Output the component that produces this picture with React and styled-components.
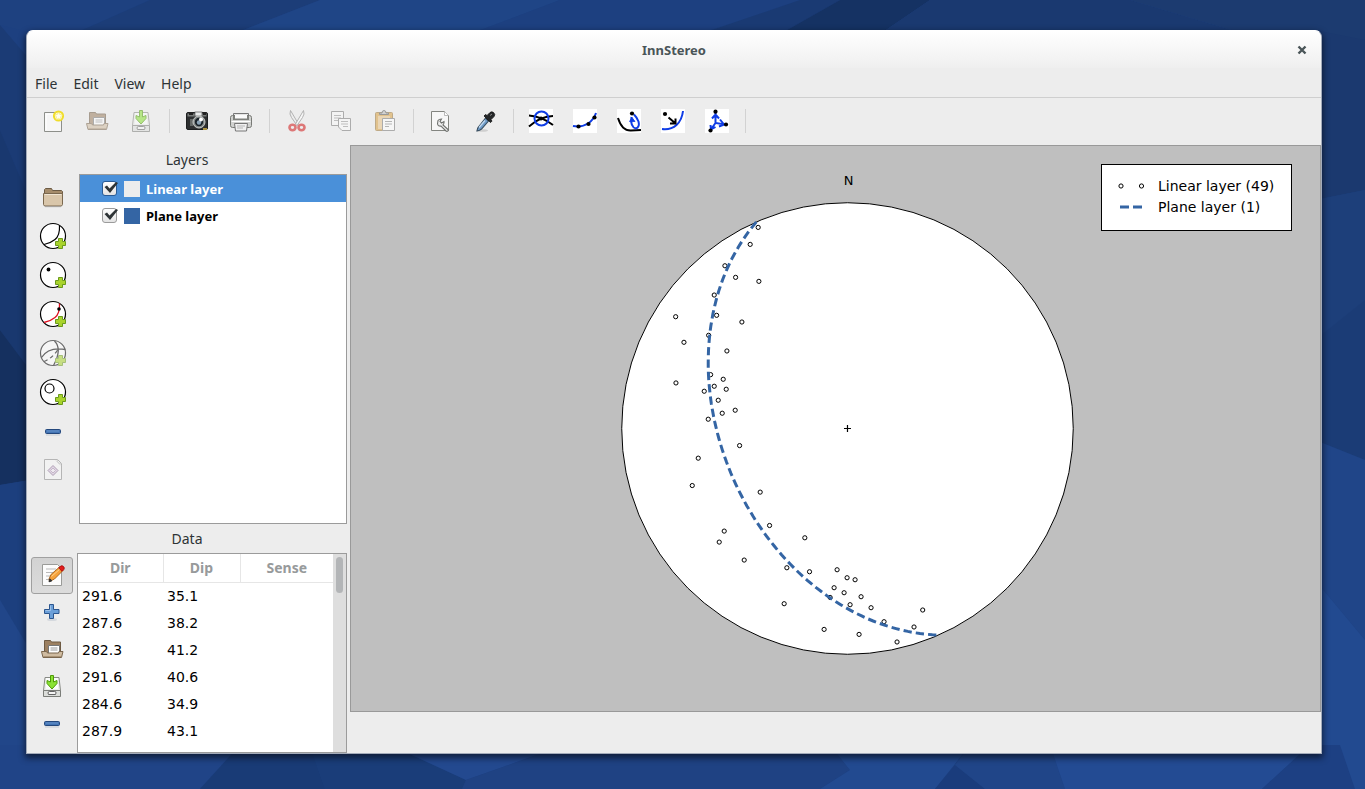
import React, { useState } from "react";
import styled, { createGlobalStyle, css } from "styled-components";

const GlobalStyle = createGlobalStyle`
  *, *::before, *::after { box-sizing: border-box; }
  body {
    margin: 0;
    font-family: "Noto Sans", "Open Sans", sans-serif;
    font-size: 14px;
    line-height: 20px;
    color: #2e3436;
    background: #1d4080;
  }
  button { font: inherit; color: inherit; }
`;

const Desktop = styled.div`
  position: relative;
  display: flex;
  min-height: 100vh;
  padding: 30px 43px 35px 26px;
`;

const Wallpaper = styled.svg`
  position: absolute;
  inset: 0;
  width: 100%;
  height: 100%;
`;

const Window = styled.main`
  position: relative;
  flex: 1;
  min-width: 0;
  display: flex;
  flex-direction: column;
  border: 1px solid #a3abba;
  border-top-color: #fff;
  border-radius: 7px 7px 0 0;
  background: #ededed;
  box-shadow: 0 3px 6px 1px rgba(10, 15, 30, 0.7);
  overflow: hidden;
`;

const TitleBar = styled.header`
  display: grid;
  grid-template-columns: 38px 1fr 38px;
  align-items: center;
  height: 37px;
  background: linear-gradient(#ffffff, #efefef);
`;

const Title = styled.h1`
  grid-column: 2;
  margin: 0;
  font-size: 13px;
  line-height: 20px;
  text-align: center;
  color: #4a5558;
`;

const CloseButton = styled.button`
  display: grid;
  place-items: center;
  width: 38px;
  height: 32px;
  padding: 0;
  border: 0;
  background: none;
`;

const MenuBar = styled.nav`
  display: flex;
  align-items: center;
  gap: 16px;
  height: 30px;
  padding: 3px 8px 0;
  border-bottom: 1px solid #cfcfcf;
`;

const MenuItem = styled.button`
  padding: 0;
  border: 0;
  background: none;
`;

const Toolbar = styled.div`
  display: flex;
  align-items: center;
  height: 47px;
  padding: 0 4px 1px;
`;

const ToolButton = styled.button`
  display: grid;
  place-items: center;
  width: 44px;
  height: 40px;
  padding: 0;
  border: 0;
  background: none;
`;

const Separator = styled.span`
  width: 12px;
  height: 24px;
  background: linear-gradient(#d2d2d2, #d2d2d2) center / 1px 100% no-repeat;
`;

const Glyph = styled.svg`
  display: block;
  overflow: visible;
  width: ${(p) => p.$size || 24}px;
  height: ${(p) => p.$size || 24}px;
  opacity: ${(p) => (p.$dim ? 0.55 : 1)};
`;

const Body = styled.div`
  flex: 1;
  display: flex;
  min-height: 0;
`;

const SidePane = styled.aside`
  flex: none;
  display: flex;
  flex-direction: column;
  width: 323px;
  padding-right: 3px;
`;

const PaneTitle = styled.h2`
  margin: 0;
  height: 29px;
  font-size: 14px;
  line-height: 29px;
  font-weight: 400;
  text-align: center;
`;

const LayerSection = styled.section`
  flex: 1;
  display: flex;
  min-height: 350px;
`;

const DataSection = styled.section`
  display: flex;
  height: 200px;
`;

const ToolColumn = styled.div`
  flex: none;
  display: flex;
  flex-direction: column;
  align-items: center;
  width: ${(p) => p.$width}px;
  padding-top: 4px;
`;

const SideButton = styled.button`
  flex: none;
  display: grid;
  place-items: center;
  width: 42px;
  height: ${(p) => p.$height}px;
  padding: 0 0 2px;
  border: 1px solid transparent;
  border-radius: 3px;
  background: none;
  ${(p) =>
    p.$pressed &&
    css`
      border-color: #a0a0a0;
      background: linear-gradient(#d2d2d2, #dcdcdc);
    `}
`;

const LayerList = styled.ul`
  flex: 1;
  margin: 0;
  padding: 0;
  list-style: none;
  border: 1px solid #9b9b9b;
  background: #fff;
`;

const LayerRow = styled.li`
  display: flex;
  align-items: center;
  height: 27px;
  padding-left: 22px;
  font-size: 13px;
  font-weight: 700;
  color: ${(p) => (p.$selected ? "#fff" : "#000")};
  background: ${(p) => (p.$selected ? "#4a90d9" : "#fff")};
`;

const LayerLabel = styled.label`
  display: flex;
  align-items: center;
  gap: 6px;
`;

const CheckWrap = styled.span`
  position: relative;
  display: block;
  width: 16px;
  height: 16px;
`;

const CheckInput = styled.input`
  appearance: none;
  display: block;
  width: 15px;
  height: 15px;
  margin: 0;
  border: 1px solid ${(p) => (p.$selected ? "#2a5c96" : "#9b9b9b")};
  border-radius: 3px;
  background: linear-gradient(#ffffff, #e3e3e3);
  &:not(:checked) + svg { display: none; }
`;

const CheckMark = styled.svg`
  position: absolute;
  left: 1px;
  top: 0;
  width: 16px;
  height: 14px;
  pointer-events: none;
`;

const Swatch = styled.span`
  width: 16px;
  height: 16px;
  background: ${(p) => p.$color};
`;

const DataFrame = styled.div`
  flex: 1;
  display: flex;
  align-items: stretch;
  overflow: hidden;
  border: 1px solid #9b9b9b;
  background: #fff;
`;

const DataTable = styled.table`
  flex: 1;
  align-self: flex-start;
  table-layout: fixed;
  border-collapse: collapse;
`;

const HeadCell = styled.th`
  width: ${(p) => p.$width};
  height: 28px;
  padding: 0;
  border-bottom: 1px solid #e6e6e6;
  font-size: 14px;
  color: #979a9b;
  & + & { border-left: 1px solid #e6e6e6; }
`;

const Cell = styled.td`
  height: 27px;
  padding: 0 4px;
  font-family: "DejaVu Sans", sans-serif;
  color: #000;
`;

const ScrollTrack = styled.div`
  flex: none;
  width: 13px;
  padding: 3px;
  background: #dedede;
`;

const ScrollThumb = styled.div`
  height: 36px;
  border-radius: 4px;
  background: #b3b5b7;
`;

const PlotPane = styled.section`
  flex: 1;
  min-width: 0;
  display: flex;
  flex-direction: column;
  padding-bottom: 41px;
`;

const Canvas = styled.div`
  position: relative;
  flex: 1;
  display: flex;
  min-height: 0;
  border: 1px solid #999;
  background: #bfbfbf;
`;

const Plot = styled.svg`
  flex: 1;
  min-width: 0;
  display: block;
`;

const Legend = styled.ul`
  position: absolute;
  top: 18px;
  right: 28px;
  display: grid;
  gap: 1px;
  margin: 0;
  padding: 11px 12px 13px 16px;
  list-style: none;
  border: 1px solid #000;
  background: #fff;
`;

const LegendItem = styled.li`
  display: flex;
  align-items: center;
  gap: 14px;
  min-width: 161px;
  font-family: "DejaVu Sans", sans-serif;
  line-height: 20px;
  color: #000;
`;

const LegendKey = styled.svg`
  width: 26px;
  height: 10px;
`;

/* Icons */

const NewIcon = () => (
  <Glyph viewBox="0 0 24 24">
    <path d="M3.500 3.500h13l4 4v15h-17z" fill="#f6f6f6" stroke="#8d8f8a" />
    <path d="M5 21V5h9" fill="none" stroke="#fff" />
    <circle cx="17.500" cy="7" r="4.600" fill="#fffbd0" stroke="#f0dd2a" strokeWidth="2" />
    <path d="M17.500 3l1.300 2.500 2.800.4-2 2 .5 2.800-2.600-1.300-2.500 1.300.5-2.800-2-2 2.800-.4z" fill="#fffef0" stroke="#f3e35a" strokeWidth=".6" />
  </Glyph>
);

const OpenIcon = ({ dim }) => (
  <Glyph viewBox="0 0 24 24" $dim={dim}>
    <path d="M4.500 3.500h6l1 1.500h9v13h-16z" fill="#9c8061" stroke="#6e5a43" />
    <path d="M8.500 8.500h11v9h-11z" fill="#fff" stroke="#777" />
    <path d="M10.500 11h7M10.500 13h7" stroke="#999" />
    <path d="M1.500 14.500h5l1 1.500h11l.5-1.500h4l-1.500 6h-18.500z" fill="#cfbba0" stroke="#7a664e" />
    <path d="M3 19.500h18" stroke="#aa9376" />
  </Glyph>
);

const SaveIcon = ({ dim }) => (
  <Glyph viewBox="0 0 24 24" $dim={dim}>
    <path d="M5 3.500h14l1.500 13v5.500H3.500v-5.500z" fill="#eceeeb" stroke="#888a85" />
    <path d="M3.500 16.500h17v6h-17z" fill="#dcdedb" stroke="#7b7d79" />
    <rect x="6" y="4" width="12" height="11" fill="#fff" opacity=".8" />
    <path d="M9.500 17.500h5q2 0 1.500 1.500l-.5 1.500h-7l-.5-1.500q0-1.500 1.500-1.500z" fill="#f5f5f5" stroke="#555" strokeWidth=".9" />
    <path d="M10.500 1.500h3v6.500l3.500-1.500v3L12 15l-5-5.500v-3L10.500 8z" fill="#8ae234" stroke="#4e9a06" />
  </Glyph>
);

const CameraIcon = () => (
  <Glyph viewBox="0 0 24 24">
    <rect x="1.500" y="3.500" width="21" height="17" rx="1.500" fill="#2d2f30" stroke="#1d1f20" />
    <path d="M2.500 4.500h19v3h-19z" fill="#777a78" />
    <path d="M4 3h4v3H4zM18 3h3v3h-3z" fill="#222" />
    <rect x="10" y="3" width="7" height="4" fill="#e8eaea" stroke="#555" strokeWidth=".7" />
    <path d="M5 10h3v7H5z" fill="#656967" />
    <circle cx="14" cy="13" r="6" fill="#858b89" stroke="#d4d6d5" strokeWidth=".9" />
    <circle cx="14" cy="13" r="4.200" fill="#1a2229" />
    <circle cx="14" cy="13.500" r="2.200" fill="#8ba3b5" />
    <circle cx="16" cy="10.500" r="2" fill="#fff" />
    <path d="M18 20h4" stroke="#d9b84a" strokeWidth="1.500" />
  </Glyph>
);

const PrinterIcon = () => (
  <Glyph viewBox="0 0 24 24">
    <path d="M4.500 4.500h15v7h-15z" fill="#e5e5e5" stroke="#777" />
    <rect x="1.500" y="6.500" width="21" height="12" rx="2" fill="#d0d1cf" stroke="#787a76" />
    <path d="M4 7h16v4H4z" fill="#7f817d" />
    <path d="M6 6h12v3.500H6z" fill="#fbfbfb" />
    <path d="M2.500 12.500h19" stroke="#fff" />
    <path d="M5.500 14.500h13l-1 7.500h-11z" fill="#f0f0f0" stroke="#777" />
    <path d="M8 17h8M8 19h6" stroke="#b5b5b5" />
  </Glyph>
);

const CutIcon = () => (
  <Glyph viewBox="0 0 24 24" $dim>
    <path d="M5.500 1.500q-1.500 3.500 1 7l5.500 8 1.500-1.500z" fill="#eee" stroke="#777" strokeWidth=".9" />
    <path d="M18.500 1.500q1.500 3.500-1 7l-5.500 8-1.500-1.500z" fill="#fff" stroke="#777" strokeWidth=".9" />
    <ellipse cx="7.500" cy="18.500" rx="3" ry="2.700" fill="none" stroke="#d01818" strokeWidth="2.600" />
    <ellipse cx="16.500" cy="18.500" rx="3" ry="2.700" fill="none" stroke="#d01818" strokeWidth="2.600" />
  </Glyph>
);

const CopyIcon = () => (
  <Glyph viewBox="0 0 24 24" $dim>
    <path d="M2.500 2.500h12v14h-12z" fill="#f8f8f8" stroke="#777" />
    <path d="M5 6.500h7M5 9h7M5 11.500h5" stroke="#999" />
    <path d="M9.500 9.500h12v12h-8.500l-3.500-3.500z" fill="#fbfbfb" stroke="#777" />
    <path d="M12 12.500h7M12 15h7M14 17.500h5" stroke="#999" />
  </Glyph>
);

const PasteIcon = () => (
  <Glyph viewBox="0 0 24 24" $dim>
    <rect x="2.500" y="3.500" width="17" height="18" rx="1" fill="#d9a040" stroke="#9a7435" />
    <path d="M5 7h12v13H5z" fill="#e9c58a" />
    <path d="M6.500 5.500V4h2.500q0-2.500 2-2.500t2 2.500h2.500v1.500z" fill="#bbb" stroke="#555" />
    <path d="M9.500 9.500h12v12h-12z" fill="#fff" stroke="#777" />
    <path d="M12 12.500h7M12 15h7M12 17.500h4" stroke="#888" />
  </Glyph>
);

const PropertiesIcon = () => (
  <Glyph viewBox="0 0 24 24">
    <path d="M2.500 2.500h13l4 4v15h-17z" fill="#f7f7f7" stroke="#838580" />
    <path d="M15.500 2.500v4h4" fill="#fff" stroke="#aaa" strokeWidth=".8" />
    <path d="M9 11.500q1-1.500 3.500-1.500l-1.500 2.500 1.500 1.500 2.500-1.500q.5 2-1 3.500l5.500 5q-1 2-2.500 1l-5-5q-3 .5-3.500-2z" fill="#eee" stroke="#70726f" strokeWidth="1.100" />
  </Glyph>
);

const PickerIcon = () => (
  <Glyph viewBox="0 0 24 24">
    <ellipse cx="9" cy="21.500" rx="6" ry="1.300" fill="#bbb" opacity=".6" />
    <path d="M12.500 9l3 3-7 8q-1.500 1.500-4.500 2 .3-3 1.800-4.500z" fill="#709cc9" stroke="#3a5062" strokeWidth="1.100" />
    <path d="M12 11.500l-6 7" stroke="#c0d8ee" strokeWidth="1.300" />
    <path d="M11 7l1.500-1.500 1.500 1 3-3q2-1.500 3.800.3t.2 3.800l-3 3 1 1.500-1.500 1.500z" fill="#252829" stroke="#111" strokeWidth=".8" />
    <path d="M17 6.500l2-1.500" stroke="#888" />
  </Glyph>
);

const Tile = ({ children }) => (
  <Glyph viewBox="0 0 24 24" fill="none" strokeWidth="2">
    <rect width="24" height="24" fill="#fff" />
    {children}
  </Glyph>
);
const BLUE = "#0f3de6";

const IntersectIcon = () => (
  <Tile>
    <path d="M0 17.500Q12 7 24 7M0 6.500q13 1 24 9.500" stroke="#000" />
    <circle cx="12.500" cy="9.500" r="7" stroke={BLUE} />
    <circle cx="12" cy="9.500" r="2" fill="#000" />
  </Tile>
);

const GirdleIcon = () => (
  <Tile>
    <path d="M0 17q9 1.500 15-2.500T23 4" stroke={BLUE} />
    <g fill="#000">
      <circle cx="5.500" cy="17.500" r="2.100" />
      <circle cx="15.500" cy="15" r="2.100" />
      <circle cx="21.500" cy="8.500" r="2.100" />
    </g>
  </Tile>
);

const RotateIcon = () => (
  <Tile>
    <path d="M1 9q4 13 13 12.500l10-.5" stroke="#000" />
    <path d="M14.500 8q-1.500 10 4.500 11.500 4-1.500 2.500-7-1.500-4-4.500-7" stroke={BLUE} />
    <path d="M12.500 12.500l2.500-4 3 4z" fill={BLUE} stroke={BLUE} strokeWidth=".8" />
    <circle cx="15" cy="4.500" r="2.100" fill="#000" />
  </Tile>
);

const NormalIcon = () => (
  <Tile>
    <path d="M1 20q9 1 14.500-4T22 2" stroke={BLUE} />
    <path d="M7.500 8.500l6.500 5.500M14.500 9.500v5h-5.500" stroke="#000" />
    <circle cx="4" cy="5" r="2.100" fill="#000" />
  </Tile>
);

const AxesIcon = () => (
  <Tile>
    <path d="M10.500 4v10l9.500 1.500M10.500 14L5.500 21M7 9.500L10.500 5.500l3.500 4M15 10.500l4 5-5 2M5.500 16l.5 4.500 4.500-2.500" stroke={BLUE} />
    <g fill="#000">
      <circle cx="10.500" cy="2.700" r="2.100" />
      <circle cx="21" cy="15.500" r="2.100" />
      <circle cx="5.500" cy="21.500" r="2.100" />
    </g>
  </Tile>
);

const FolderIcon = () => (
  <Glyph viewBox="0 0 24 24">
    <path d="M3.500 11V4.500l1-1h6l1 2h9l1 1V11z" fill="#a58c6b" stroke="#6c5b45" />
    <path d="M2.500 8.500h19v11l-1 1.500H3.500l-1-1.500z" fill="#d9c6aa" stroke="#7a684f" />
    <path d="M3.500 9.500h17" stroke="#efe4d2" />
    <path d="M4 21.700h16" stroke="#999" opacity=".6" />
  </Glyph>
);

const NetIcon = ({ dim, children }) => (
  <Glyph viewBox="0 0 28 28" $size={28} $dim={dim} fill="none">
    <circle cx="14" cy="14" r="12.500" fill="#fff" stroke="#000" strokeWidth="1.200" />
    {children}
    <path d="M19.500 16.500h4v3h3v4h-3v3h-4v-3h-3v-4h3z" fill="#a9d32c" stroke="#6b9a1c" />
  </Glyph>
);

const PlaneLayerIcon = () => (
  <NetIcon>
    <path d="M20.500 3.500q.5 10-4.500 14T5 22.500" stroke="#000" strokeWidth="1.200" />
  </NetIcon>
);
const LineLayerIcon = () => (
  <NetIcon>
    <circle cx="9.500" cy="8.500" r="1.900" fill="#000" />
  </NetIcon>
);
const FaultLayerIcon = () => (
  <NetIcon>
    <path d="M20.500 3.500q.5 10-4.500 14T5 22.500" stroke="#e01020" strokeWidth="1.300" />
    <circle cx="20" cy="9" r="1.800" fill="#000" />
  </NetIcon>
);
const EigenLayerIcon = () => (
  <NetIcon dim>
    <path d="M15.500 2q8 8-1 24.500M2.500 18.500q7-11 24-8" stroke="#000" strokeWidth="1.300" />
    <path d="M5 22.500q8-3 14-12" stroke="#000" strokeWidth="1.200" strokeDasharray="4 3" />
  </NetIcon>
);
const SmallCircleIcon = () => (
  <NetIcon>
    <circle cx="10.500" cy="10.500" r="4.500" stroke="#000" strokeWidth="1.200" />
  </NetIcon>
);

const MinusIcon = () => (
  <Glyph viewBox="0 0 24 24">
    <rect x="5" y="15" width="14" height="2" fill="#c5cbd4" opacity=".5" />
    <rect x="4.500" y="10.500" width="15" height="4" rx="1" fill="#4475b5" stroke="#24487c" />
    <path d="M6 12h12" stroke="#6793c9" />
  </Glyph>
);

const PlusIcon = () => (
  <Glyph viewBox="0 0 24 24">
    <ellipse cx="12" cy="19.500" rx="5" ry="1.500" fill="#c5cbd4" opacity=".6" />
    <path d="M9.500 4.500h4v5h5.500v4h-5.500v5h-4v-5H4.500v-4h5z" fill="#6b9fd8" stroke="#2c568f" strokeLinejoin="round" />
    <path d="M10.500 5.500v5H5.500" fill="none" stroke="#9cc1e8" />
  </Glyph>
);

const LayerPropsIcon = () => (
  <Glyph viewBox="0 0 24 24" $dim>
    <path d="M3.500 1.500h13l4 4v16h-17z" fill="#f7f7f7" stroke="#888" />
    <path d="M15 2.500l5 5M16.500 1.500q-1 4 4 4" fill="none" stroke="#aaa" strokeWidth=".8" />
    <path d="M12 7.500l5 5-5 5-5-5z" fill="#d9c6de" stroke="#7d5f88" />
    <path d="M12 10l2.500 2.500L12 15l-2.500-2.500z" fill="#efe6f1" stroke="#a58bad" />
  </Glyph>
);

const EditIcon = () => (
  <Glyph viewBox="0 0 24 24">
    <path d="M2.500 1.500h15l4 4v17h-19z" fill="#fcfcfc" stroke="#9a9b98" />
    <path d="M6 6h10M6 9.500h10M6 13h9M6 16.500h4" stroke="#b9b9b9" />
    <path d="M9 16l2-4.500L19.500 4l3.500 3.500-8.500 8.500-5 2.500z" fill="#f6a13a" stroke="#a5611a" strokeWidth=".9" />
    <path d="M11.500 13.500l9-8" stroke="#fcd28f" />
    <path d="M18.700 5l2-2q1.500-.8 2.800.5t.5 2.800l-2 2z" fill="#e01c1c" stroke="#a50000" strokeWidth=".8" />
    <path d="M9 18.800l.8-3 2.200 2z" fill="#333" stroke="#333" />
  </Glyph>
);

/* Data */

const MENUS = ["File", "Edit", "View", "Help"];

const TOOL_GROUPS = [
  [["New", NewIcon], ["Open", OpenIcon, true], ["Save", SaveIcon, true]],
  [["Save image", CameraIcon], ["Print", PrinterIcon]],
  [["Cut", CutIcon], ["Copy", CopyIcon], ["Paste", PasteIcon]],
  [["Plot properties", PropertiesIcon], ["Pick color", PickerIcon]],
  [
    ["Plane intersections", IntersectIcon],
    ["Best fitting plane", GirdleIcon],
    ["Rotate", RotateIcon],
    ["Normals", NormalIcon],
    ["Eigenvectors", AxesIcon],
  ],
];

const LAYER_TOOLS = [
  ["New group", FolderIcon],
  ["New plane layer", PlaneLayerIcon],
  ["New linear layer", LineLayerIcon],
  ["New faultplane layer", FaultLayerIcon],
  ["New eigenvector layer", EigenLayerIcon],
  ["New small circle layer", SmallCircleIcon],
  ["Delete layer", MinusIcon],
  ["Layer properties", LayerPropsIcon],
];

const DATA_TOOLS = [
  ["Edit data", EditIcon],
  ["Add row", PlusIcon],
  ["Import data", OpenIcon],
  ["Export data", SaveIcon],
  ["Delete row", MinusIcon],
];

const LAYERS = [
  { name: "Linear layer", color: "#ededed" },
  { name: "Plane layer", color: "#3465a4" },
];

const ROWS = [
  ["291.6", "35.1"],
  ["287.6", "38.2"],
  ["282.3", "41.2"],
  ["291.6", "40.6"],
  ["284.6", "34.9"],
  ["287.9", "43.1"],
];

/* Projected lineations, in plot units from the centre of the net. */
const POINTS = [
  [-89.4, -201.3], [-97.4, -184.3], [-122.7, -162.9], [-112, -151.3], [-88.7, -147.3],
  [-133.4, -133.6], [-172, -111.9], [-131, -113.3], [-105.7, -106.6], [-139, -93.3],
  [-163.7, -86.3], [-120.7, -77.6], [-137, -53.9], [-124.4, -49.3], [-171.7, -45.6],
  [-133.4, -42.3], [-121.4, -39.3], [-143.4, -37.3], [-129.4, -28.3], [-112.4, -18.3],
  [-125.4, -15.3], [-139.4, -9.3], [-108, 17.1], [-149.4, 29.7], [-155.4, 57.1],
  [-87.4, 63.7], [-78, 97.1], [-123.4, 102.7], [-128.4, 113.7], [-42.7, 109.4],
  [-103.4, 131.7], [-60.7, 139.4], [-38, 143.4], [-63.4, 175.4], [-23.4, 201.1],
  [-10.4, 141.4], [-13.4, 159.4], [-3.4, 164.4], [-17.4, 169.1], [-0.4, 149.4],
  [7.6, 151.4], [2.6, 176.4], [13.6, 168.4], [23.6, 179.4], [36.6, 193.4],
  [11.6, 206.1], [49.6, 213.7], [66.6, 198.7], [75.3, 181.7],
];

const RADIUS = 226;

/* Equal-area projection of the great circle of a plane. */
function greatCircle(strikeDeg, dipDeg) {
  const rad = Math.PI / 180;
  const strike = strikeDeg * rad;
  const dip = dipDeg * rad;
  const along = [-Math.sin(strike), -Math.cos(strike)];
  const across = [-Math.cos(strike), Math.sin(strike)];
  const out = [];
  for (let rake = 0; rake <= 180; rake += 2) {
    const a = Math.cos(rake * rad);
    const b = Math.sin(rake * rad) * Math.cos(dip);
    const down = Math.sin(rake * rad) * Math.sin(dip);
    const r = (RADIUS * Math.sqrt(1 - down)) / Math.hypot(a, b);
    const x = r * (a * along[0] + b * across[0]);
    const y = r * (a * along[1] + b * across[1]);
    out.push(`${x.toFixed(1)},${y.toFixed(1)}`);
  }
  return out.join(" ");
}

/* Facets of the desktop background. */
const FACETS = [
  ["0,0 150,0 60,40 0,25", "#1e4180"],
  ["150,0 320,0 230,35 60,40", "#1c3d78"],
  ["320,0 560,0 470,34 230,35", "#1f4586"],
  ["560,0 800,0 700,34 470,34", "#1d4080"],
  ["800,0 840,0 780,34 700,34", "#1a3a73"],
  ["840,0 930,0 880,34 780,34", "#153263"],
  ["930,0 1130,0 1245,34 880,34", "#1a3970"],
  ["1130,0 1365,0 1365,40 1245,34", "#1c3b70"],
  ["0,25 30,60 30,200 0,130", "#1b3b75"],
  ["0,130 30,200 30,370 0,330", "#19386f"],
  ["0,330 30,370 30,480 0,485", "#15305f"],
  ["0,485 30,480 30,650 0,600", "#1c3f7e"],
  ["0,600 30,650 30,789 0,789", "#214689"],
  ["1315,30 1365,40 1365,190 1315,200", "#1b396f"],
  ["1315,200 1365,190 1365,300 1315,340", "#1d3f7a"],
  ["1315,340 1365,300 1365,460 1315,440", "#1b3c76"],
  ["1315,440 1365,460 1365,640 1315,580", "#204588"],
  ["1315,580 1365,640 1365,789 1315,789", "#224a90"],
  ["0,745 240,745 200,789 0,789", "#204487"],
  ["240,745 310,745 325,789 200,789", "#193b76"],
  ["310,745 390,745 466,780 462,789 325,789", "#1a3d79"],
  ["390,745 565,745 466,780", "#23498f"],
  ["565,745 830,745 850,770 820,789 462,789 466,780", "#1f4283"],
  ["830,745 970,745 935,789 820,789 850,770", "#224a90"],
  ["955,765 985,789 935,789", "#1a3c7c"],
  ["970,745 1050,745 1065,789 985,789 955,765", "#204588"],
  ["1050,745 1310,745 1262,789 1065,789", "#234b93"],
  ["1310,745 1340,745 1355,789 1262,789", "#1d4083"],
];

export default function App() {
  const [visible, setVisible] = useState([true, true]);
  const toggle = (i) => setVisible(visible.map((v, k) => (k === i ? !v : v)));

  return (
    <>
      <GlobalStyle />
      <Desktop>
        <Wallpaper viewBox="0 0 1365 789" preserveAspectRatio="none" aria-hidden="true">
          {FACETS.map(([points, fill]) => (
            <polygon key={points} points={points} fill={fill} />
          ))}
        </Wallpaper>
        <Window>
          <TitleBar>
            <Title>InnStereo</Title>
            <CloseButton aria-label="Close">
              <svg width="10" height="10" viewBox="0 0 10 10">
                <path d="M1.500 1.500l7 7M8.500 1.500l-7 7" stroke="#4a5558" strokeWidth="2.400" />
              </svg>
            </CloseButton>
          </TitleBar>
          <MenuBar>
            {MENUS.map((m) => (
              <MenuItem key={m}>{m}</MenuItem>
            ))}
          </MenuBar>
          <Toolbar role="toolbar">
            {TOOL_GROUPS.map((group, g) => (
              <React.Fragment key={g}>
                {group.map(([label, Icon, dim]) => (
                  <ToolButton key={label} aria-label={label}>
                    <Icon dim={dim} />
                  </ToolButton>
                ))}
                <Separator />
              </React.Fragment>
            ))}
          </Toolbar>
          <Body>
            <SidePane>
              <PaneTitle>Layers</PaneTitle>
              <LayerSection>
                <ToolColumn $width={52}>
                  {LAYER_TOOLS.map(([label, Icon]) => (
                    <SideButton key={label} $height={39} aria-label={label}>
                      <Icon />
                    </SideButton>
                  ))}
                </ToolColumn>
                <LayerList>
                  {LAYERS.map((layer, i) => (
                    <LayerRow key={layer.name} $selected={i === 0}>
                      <LayerLabel>
                        <CheckWrap>
                          <CheckInput
                            type="checkbox"
                            $selected={i === 0}
                            checked={visible[i]}
                            onChange={() => toggle(i)}
                          />
                          <CheckMark viewBox="0 0 16 14">
                            <path d="M1.500 6l2.500-1.500 2.500 3L13 1l2 1L7 12z" fill="#2e3436" />
                          </CheckMark>
                        </CheckWrap>
                        <Swatch $color={layer.color} />
                        {layer.name}
                      </LayerLabel>
                    </LayerRow>
                  ))}
                </LayerList>
              </LayerSection>
              <PaneTitle>Data</PaneTitle>
              <DataSection>
                <ToolColumn $width={50}>
                  {DATA_TOOLS.map(([label, Icon], i) => (
                    <SideButton key={label} $height={37} $pressed={i === 0} aria-label={label}>
                      <Icon />
                    </SideButton>
                  ))}
                </ToolColumn>
                <DataFrame>
                  <DataTable>
                    <thead>
                      <tr>
                        <HeadCell $width="85px">Dir</HeadCell>
                        <HeadCell $width="77px">Dip</HeadCell>
                        <HeadCell>Sense</HeadCell>
                      </tr>
                    </thead>
                    <tbody>
                      {ROWS.map(([dir, dip], i) => (
                        <tr key={i}>
                          <Cell>{dir}</Cell>
                          <Cell>{dip}</Cell>
                          <Cell />
                        </tr>
                      ))}
                    </tbody>
                  </DataTable>
                  <ScrollTrack>
                    <ScrollThumb />
                  </ScrollTrack>
                </DataFrame>
              </DataSection>
            </SidePane>
            <PlotPane>
              <Canvas>
                <Plot viewBox="-497 -282 970 564" role="img" aria-label="Stereographic plot">
                  <circle r={RADIUS} fill="#fff" stroke="#000" />
                  <text x="1" y="-244" textAnchor="middle" fontFamily="DejaVu Sans, sans-serif" fontSize="13">
                    N
                  </text>
                  <path d="M-3.500 0h7M0-3.500v7" stroke="#000" strokeWidth="1.200" />
                  {visible[0] && (
                    <g fill="none" stroke="#000">
                      {POINTS.map(([x, y]) => (
                        <circle key={`${x},${y}`} cx={x} cy={y} r="2.100" />
                      ))}
                    </g>
                  )}
                  {visible[1] && (
                    <polyline
                      points={greatCircle(23.8, 44)}
                      fill="none"
                      stroke="#3465a4"
                      strokeWidth="3"
                      strokeDasharray="8.300 4.100"
                    />
                  )}
                </Plot>
                <Legend>
                  <LegendItem>
                    <LegendKey viewBox="0 0 26 10" fill="none" stroke="#000">
                      <circle cx="3" cy="5" r="2.100" />
                      <circle cx="23.500" cy="5" r="2.100" />
                    </LegendKey>
                    Linear layer (49)
                  </LegendItem>
                  <LegendItem>
                    <LegendKey viewBox="0 0 26 10">
                      <path d="M2 5h22" stroke="#3465a4" strokeWidth="3" strokeDasharray="9 4" />
                    </LegendKey>
                    Plane layer (1)
                  </LegendItem>
                </Legend>
              </Canvas>
            </PlotPane>
          </Body>
        </Window>
      </Desktop>
    </>
  );
}
